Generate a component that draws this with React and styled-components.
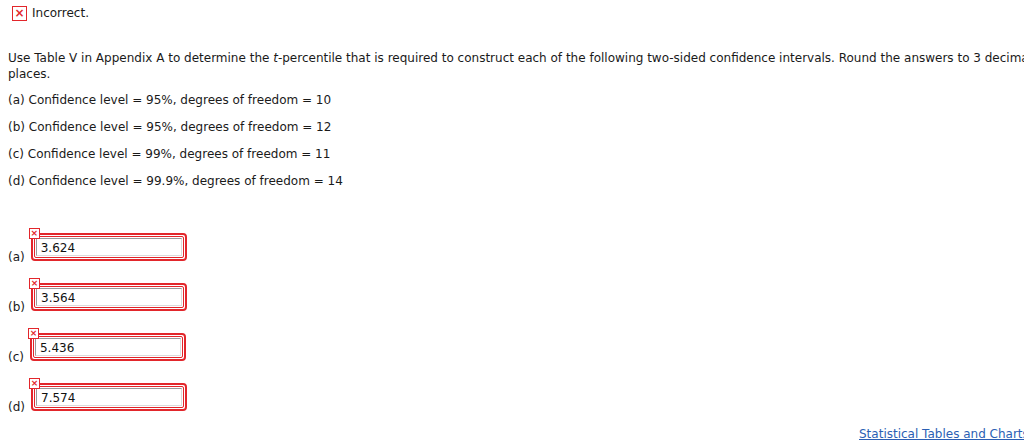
import React from 'react';
import styled, { createGlobalStyle } from 'styled-components';

const Global = createGlobalStyle`
  body {
    margin: 0;
    background: #fff;
    font-family: "DejaVu Sans", Verdana, sans-serif;
    font-size: 12px;
    color: #1a1a1a;
  }
`;

const Page = styled.div`
  width: 1024px;
  height: 443px;
  overflow: hidden;
  position: relative;
  padding: 0 0 0 8px;
  box-sizing: border-box;
`;

const Status = styled.div`
  display: flex;
  align-items: center;
  gap: 5px;
  height: 16px;
  padding: 5px 0 0 4px;
  font-size: 12px;
`;

const BigMark = styled.span`
  width: 13px;
  height: 13px;
  border: 1px solid #e2262b;
  display: flex;
  align-items: center;
  justify-content: center;
  color: #e2262b;
  font-weight: bold;
  font-size: 12px;
  line-height: 1;
`;

const Question = styled.p`
  margin: 29px 0 0;
  line-height: 16px;
  width: 1060px;
`;

const Parts = styled.div`
  margin-top: 10px;
  display: flex;
  flex-direction: column;
  gap: 11px;
`;

const Part = styled.div`
  line-height: 16px;
`;

const Answers = styled.div`
  margin-top: 44px;
  display: flex;
  flex-direction: column;
  gap: 22px;
`;

const AnswerRow = styled.div`
  display: flex;
  align-items: flex-end;
  gap: 6px;
`;

const Label = styled.span`
  line-height: 14px;
  margin-bottom: -3px;
`;

const Field = styled.div`
  position: relative;
  width: 156px;
  height: 28px;
  box-sizing: border-box;
  border: 2px solid #e2262b;
  border-radius: 4px;
  padding: 1px;
  background: #fff;
`;

const Inner = styled.div`
  height: 100%;
  box-sizing: border-box;
  border: 1px solid #e2262b;
  border-radius: 2px;
  padding: 1px;
`;

const Value = styled.div`
  height: 100%;
  box-sizing: border-box;
  border-top: 1px solid #9a9a9a;
  border-left: 1px solid #9a9a9a;
  border-right: 1px solid #dcdcdc;
  border-bottom: 1px solid #dcdcdc;
  padding: 2px 0 0 4px;
  line-height: 14px;
  font-size: 12px;
  color: #111;
`;

const Mark = styled.span`
  position: absolute;
  left: -4px;
  top: -7px;
  width: 9px;
  height: 9px;
  background: #fff;
  border: 1px solid #e2262b;
  color: #e2262b;
  font-size: 9px;
  font-weight: bold;
  line-height: 8px;
  text-align: center;
`;

const TablesLink = styled.a`
  position: absolute;
  left: 859px;
  top: 427px;
  color: #2b5fb4;
  text-decoration: underline;
  white-space: nowrap;
  font-size: 12px;
`;

const parts = [
  ['a', '95%', '10'],
  ['b', '95%', '12'],
  ['c', '99%', '11'],
  ['d', '99.9%', '14'],
];

const answers = [
  ['a', '3.624'],
  ['b', '3.564'],
  ['c', '5.436'],
  ['d', '7.574'],
];

const App = () => (
  <Page>
    <Global />
    <Status>
      <BigMark>×</BigMark>
      <span>Incorrect.</span>
    </Status>
    <Question>
      Use Table V in Appendix A to determine the <i>t</i>-percentile that is required to construct each of the following two-sided confidence intervals. Round the answers to 3 decimal places.
    </Question>
    <Parts>
      {parts.map(([k, lvl, df]) => (
        <Part key={k}>
          ({k}) Confidence level = {lvl}, degrees of freedom = {df}
        </Part>
      ))}
    </Parts>
    <Answers>
      {answers.map(([k, v]) => (
        <AnswerRow key={k}>
          <Label>({k})</Label>
          <Field>
            <Mark>×</Mark>
            <Inner>
              <Value>{v}</Value>
            </Inner>
          </Field>
        </AnswerRow>
      ))}
    </Answers>
    <TablesLink href="#">Statistical Tables and Charts</TablesLink>
  </Page>
);

export default App;
